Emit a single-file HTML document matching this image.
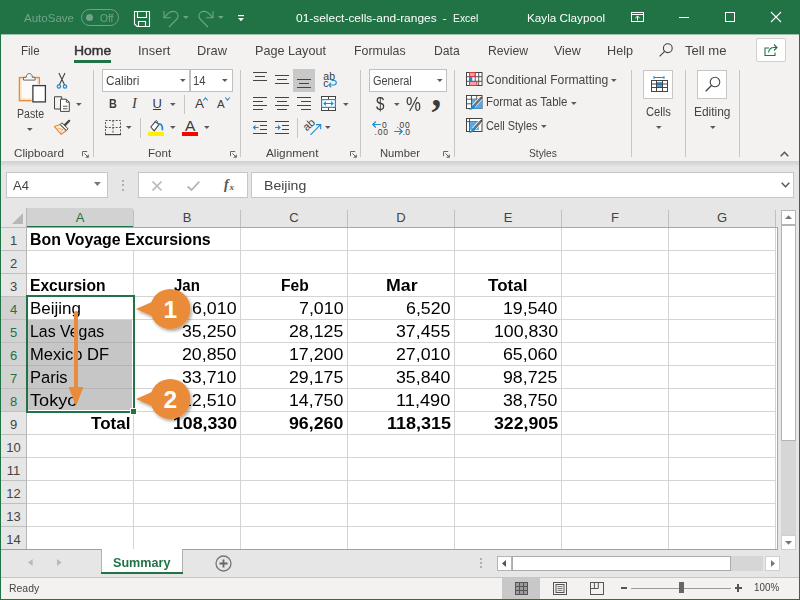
<!DOCTYPE html>
<html>
<head>
<meta charset="utf-8">
<title>01-select-cells-and-ranges - Excel</title>
<style>
html,body{margin:0;padding:0;}
body{width:800px;height:600px;overflow:hidden;background:#f3f2f1;font-family:"Liberation Sans",sans-serif;font-size:12px;color:#444;position:relative;}
#win{position:absolute;left:0;top:0;width:800px;height:600px;overflow:hidden;}
#win div,#win span,#win svg{position:absolute;}
#win svg{overflow:visible;}
.t{white-space:nowrap;line-height:1;color:#444;}

</style>
</head>
<body>
<div id="win">

<!-- TITLE BAR -->
<div style="left:0px;top:0px;width:800px;height:34px;background:#217346;"></div>
<div style="left:0px;top:34px;width:800px;height:1px;background:#9fbfad;"></div>
<span class="t" style="top:13.00px;font-size:11.8px;left:24.00px;transform:scaleX(0.9775);transform-origin:0 0;color:#6fa588;">AutoSave</span>
<div style="left:81px;top:9px;width:38px;height:17px;border:1px solid #6fa588;border-radius:9px;box-sizing:border-box;"></div>
<div style="left:86px;top:14px;width:7px;height:7px;border-radius:4px;background:#6fa588;"></div>
<span class="t" style="top:13.00px;font-size:11px;left:100.00px;transform:scaleX(0.9298);transform-origin:0 0;color:#6fa588;">Off</span>
<svg style="left:134px;top:11px;" width="16" height="16" viewBox="0 0 16 16"><path d="M0.5 0.5 H15.5 V15.5 H3 L0.5 13 Z" fill="none" stroke="#fff" stroke-width="1.1"/><path d="M3.5 0.5 V6.5 H12.5 V0.5" fill="none" stroke="#fff" stroke-width="1.1"/><path d="M4.5 15.5 V10.5 H11.5 V15.5" fill="none" stroke="#fff" stroke-width="1.1"/></svg>
<svg style="left:163px;top:11px;" width="16" height="16" viewBox="0 0 16 16"><path d="M1 0 V6.8 H7.8" fill="none" stroke="#6fa588" stroke-width="1.1"/><path d="M1.3 6.5 L5 2.6 C7.5 0 12 -0.5 14 2 C16 4.5 15 7 13 9 L6 16" fill="none" stroke="#6fa588" stroke-width="1.1"/></svg>
<svg style="left:182.7px;top:15.7px;" width="5.6" height="3.0" viewBox="0 0 5.6 3.0"><path d="M0 0 H5.6 L2.8 3.0 Z" fill="#6fa588"/></svg>
<svg style="left:198px;top:11px;" width="16" height="16" viewBox="0 0 16 16"><g transform="translate(16,0) scale(-1,1)"><path d="M1 0 V6.8 H7.8" fill="none" stroke="#6fa588" stroke-width="1.1"/><path d="M1.3 6.5 L5 2.6 C7.5 0 12 -0.5 14 2 C16 4.5 15 7 13 9 L6 16" fill="none" stroke="#6fa588" stroke-width="1.1"/></g></svg>
<svg style="left:217.7px;top:15.7px;" width="5.6" height="3.0" viewBox="0 0 5.6 3.0"><path d="M0 0 H5.6 L2.8 3.0 Z" fill="#6fa588"/></svg>
<svg style="left:237.5px;top:14.5px;" width="7" height="7" viewBox="0 0 7 7"><path d="M0 0.6 H6" stroke="#fff" stroke-width="1.2"/><path d="M0 3 H6 L3 6.3 Z" fill="#fff"/></svg>
<span class="t" style="top:13.00px;font-size:11.8px;left:295.50px;transform:scaleX(1.0118);transform-origin:0 0;color:#fff;">01-select-cells-and-ranges</span>
<span class="t" style="top:13.00px;font-size:11.8px;left:442.60px;color:#fff;">-</span>
<span class="t" style="top:13.00px;font-size:11.8px;left:453.30px;transform:scaleX(0.8769);transform-origin:0 0;color:#fff;">Excel</span>
<span class="t" style="top:13.00px;font-size:11.8px;left:527.40px;transform:scaleX(0.9910);transform-origin:0 0;color:#fff;">Kayla Claypool</span>
<svg style="left:631px;top:12px;" width="13" height="10" viewBox="0 0 13 10"><rect x="0.5" y="0.5" width="12" height="9" fill="none" stroke="#fff" stroke-width="1"/><path d="M0.5 2.5 H12.5" stroke="#fff" stroke-width="1"/><path d="M6.5 8.5 V4.2 M4.3 6.2 L6.5 4 L8.7 6.2" fill="none" stroke="#fff" stroke-width="1"/></svg>
<div style="left:679px;top:17px;width:10px;height:1px;background:#fff;"></div>
<div style="left:725px;top:12px;width:10px;height:10px;border:1px solid #fff;box-sizing:border-box;"></div>
<svg style="left:771px;top:12px;" width="10" height="10" viewBox="0 0 10 10"><path d="M0 0 L10 10 M10 0 L0 10" stroke="#fff" stroke-width="1.1"/></svg>

<!-- TABS -->
<span class="t" style="top:44.00px;font-size:13.6px;left:20.70px;transform:scaleX(0.8495);transform-origin:0 0;">File</span>
<span class="t" style="top:44.00px;font-size:13.6px;left:74.00px;transform:scaleX(1.0272);transform-origin:0 0;color:#333;-webkit-text-stroke:0.45px #333;">Home</span>
<div style="left:74px;top:60px;width:37px;height:3px;background:#217346;"></div>
<span class="t" style="top:44.00px;font-size:13.6px;left:137.70px;transform:scaleX(0.9500);transform-origin:0 0;">Insert</span>
<span class="t" style="top:44.00px;font-size:13.6px;left:196.70px;transform:scaleX(0.9447);transform-origin:0 0;">Draw</span>
<span class="t" style="top:44.00px;font-size:13.6px;left:255.00px;transform:scaleX(0.9298);transform-origin:0 0;">Page Layout</span>
<span class="t" style="top:44.00px;font-size:13.6px;left:354.30px;transform:scaleX(0.9116);transform-origin:0 0;">Formulas</span>
<span class="t" style="top:44.00px;font-size:13.6px;left:434.30px;transform:scaleX(0.8935);transform-origin:0 0;">Data</span>
<span class="t" style="top:44.00px;font-size:13.6px;left:488.00px;transform:scaleX(0.8967);transform-origin:0 0;">Review</span>
<span class="t" style="top:44.00px;font-size:13.6px;left:554.00px;transform:scaleX(0.9166);transform-origin:0 0;">View</span>
<span class="t" style="top:44.00px;font-size:13.6px;left:607.20px;transform:scaleX(0.9303);transform-origin:0 0;">Help</span>
<svg style="left:659px;top:43px;" width="14" height="14" viewBox="0 0 14 14"><circle cx="8.8" cy="5.2" r="4.4" fill="none" stroke="#444" stroke-width="1.1"/><path d="M5.6 8.4 L0.6 13.4" stroke="#444" stroke-width="1.2"/></svg>
<span class="t" style="top:44.00px;font-size:13.6px;left:685.20px;transform:scaleX(0.9649);transform-origin:0 0;">Tell me</span>
<div style="left:756px;top:38px;width:30px;height:24px;background:#fff;border:1px solid #d0d0d0;border-radius:2px;box-sizing:border-box;"></div>
<svg style="left:764px;top:43px;" width="14" height="13" viewBox="0 0 14 13"><path d="M5 5 H1 V12.5 H11 V9.5" fill="none" stroke="#217346" stroke-width="1.1"/><path d="M4.5 9.5 C5 6.5 7 4.5 10 4.5 H12.5 M10 1.5 L13 4.5 L10 7.5" fill="none" stroke="#217346" stroke-width="1.1"/></svg>

<!-- RIBBON -->
<svg style="left:18px;top:72px;" width="30" height="32" viewBox="0 0 30 32"><rect x="1.5" y="5.6" width="19.8" height="23" fill="#fbfaf8" stroke="#e9893a" stroke-width="1.5"/><rect x="2.9" y="7" width="17" height="20.2" fill="none" stroke="#fbdcae" stroke-width="1.3"/><path d="M5.5 8.1 V5.3 H8.2 C8.2 0.3 14.4 0.3 14.4 5.3 H17.1 V8.1 Z" fill="#f7f7f7" stroke="#6a6a6a" stroke-width="1"/><rect x="13.6" y="12.3" width="15" height="19" fill="#f3f2f1"/><rect x="14.9" y="13.6" width="12.5" height="16.3" fill="#fff" stroke="#3b3b3b" stroke-width="1.3"/></svg>
<span class="t" style="top:108.00px;font-size:12.3px;left:16.90px;transform:scaleX(0.8623);transform-origin:0 0;">Paste</span>
<svg style="left:26.8px;top:127.6px;" width="5.6" height="3.0" viewBox="0 0 5.6 3.0"><path d="M0 0 H5.6 L2.8 3.0 Z" fill="#5a5a5a"/></svg>
<svg style="left:57px;top:72.5px;" width="10" height="16" viewBox="0 0 10 16"><path d="M1.9 0 L7.6 11.9 M8 0 L2.3 11.9" stroke="#444" stroke-width="1.1" fill="none"/><circle cx="1.9" cy="13.5" r="1.7" fill="none" stroke="#1e8bcd" stroke-width="1.2"/><circle cx="8" cy="13.5" r="1.7" fill="none" stroke="#1e8bcd" stroke-width="1.2"/></svg>
<svg style="left:54px;top:96px;" width="17" height="17" viewBox="0 0 17 17"><path d="M7.7 3 V0.75 H0.5 V13 H6" fill="none" stroke="#444" stroke-width="1"/><path d="M6.5 3.2 H12.3 L15.3 6.2 V15.4 H6.5 Z" fill="#fff" stroke="#444" stroke-width="1"/><path d="M12.3 3.2 V6.2 H15.3" fill="none" stroke="#444" stroke-width="0.9"/><path d="M9 10.25 H13.5 M9 12.75 H13.5" stroke="#444" stroke-width="0.9"/></svg>
<svg style="left:75.8px;top:102.6px;" width="5.6" height="3.0" viewBox="0 0 5.6 3.0"><path d="M0 0 H5.6 L2.8 3.0 Z" fill="#5a5a5a"/></svg>
<svg style="left:54px;top:120px;" width="17" height="15" viewBox="0 0 17 15"><path d="M15.2 0.8 L10.6 5.4" stroke="#444" stroke-width="2.2" fill="none" stroke-linecap="round"/><path d="M6.2 4.5 L0.5 6.6 L7.2 14.3 L12.3 10.5 Z" fill="#fdf3e4" stroke="#e8822d" stroke-width="1.1" stroke-linejoin="round"/><path d="M3.6 8 L8.5 9.5 M6 12.5 L10 8" stroke="#e8822d" stroke-width="0.7" fill="none"/><path d="M7.9 2.75 L14 8.75 L12.3 10.5 L6.2 4.5 Z" fill="#f3f2f1" stroke="#444" stroke-width="1" stroke-linejoin="round"/></svg>
<span class="t" style="top:148.00px;font-size:11.2px;left:13.75px;transform:scaleX(1.0431);transform-origin:0 0;">Clipboard</span>
<svg style="left:82px;top:150.5px;" width="7" height="7" viewBox="0 0 7 7"><path d="M0.5 5.2 V0.5 H5.2" fill="none" stroke="#666" stroke-width="1"/><path d="M2.4 2.4 L5.6 5.6" stroke="#666" stroke-width="1"/><path d="M6.8 3.2 V6.8 H3.2 Z" fill="#666"/></svg>
<div style="left:93px;top:69.5px;width:1px;height:87.5px;background:#c8c6c4;"></div>
<div style="left:102px;top:69px;width:88px;height:23px;background:#fff;border:1px solid #c0c0c0;box-sizing:border-box;"></div>
<span class="t" style="top:75.00px;font-size:12.5px;left:105.50px;transform:scaleX(0.9397);transform-origin:0 0;">Calibri</span>
<svg style="left:179.7px;top:79.1px;" width="5.6" height="3.0" viewBox="0 0 5.6 3.0"><path d="M0 0 H5.6 L2.8 3.0 Z" fill="#5a5a5a"/></svg>
<div style="left:190px;top:69px;width:43px;height:23px;background:#fff;border:1px solid #c0c0c0;box-sizing:border-box;"></div>
<span class="t" style="top:75.00px;font-size:12.5px;left:193.00px;transform:scaleX(0.9009);transform-origin:0 0;">14</span>
<svg style="left:222.2px;top:79.1px;" width="5.6" height="3.0" viewBox="0 0 5.6 3.0"><path d="M0 0 H5.6 L2.8 3.0 Z" fill="#5a5a5a"/></svg>
<span class="t" style="top:97.00px;font-size:13px;left:109.30px;font-weight:bold;color:#3b3b3b;transform:scaleX(0.84);transform-origin:0 0;">B</span>
<span class="t" style="top:95.53px;font-size:14.5px;left:132.00px;font-style:italic;color:#3b3b3b;font-family:'Liberation Serif',serif;">I</span>
<span class="t" style="top:97.00px;font-size:13px;left:152.50px;color:#3b3b3b;">U</span>
<div style="left:152.5px;top:109.3px;width:8.5px;height:1px;background:#3b3b3b;"></div>
<svg style="left:170.2px;top:102.6px;" width="5.6" height="3.0" viewBox="0 0 5.6 3.0"><path d="M0 0 H5.6 L2.8 3.0 Z" fill="#5a5a5a"/></svg>
<div style="left:184px;top:95px;width:1px;height:19px;background:#c8c6c4;"></div>
<span class="t" style="top:97.00px;font-size:13.5px;left:195.00px;color:#3b3b3b;">A</span>
<svg style="left:203.3px;top:96.8px;" width="5" height="4" viewBox="0 0 5 4"><path d="M0.3 3.5 L2.5 0.8 L4.7 3.5" fill="none" stroke="#1e8bcd" stroke-width="1.1"/></svg>
<span class="t" style="top:99.00px;font-size:11.5px;left:217.00px;color:#3b3b3b;">A</span>
<svg style="left:225px;top:96.8px;" width="5" height="4" viewBox="0 0 5 4"><path d="M0.3 0.5 L2.5 3.2 L4.7 0.5" fill="none" stroke="#1e8bcd" stroke-width="1.1"/></svg>
<svg style="left:105px;top:120px;" width="16" height="15" viewBox="0 0 16 15"><rect x="0.5" y="0.5" width="15" height="14" fill="none" stroke="#555" stroke-width="1" stroke-dasharray="2 1.4"/><path d="M8 0.5 V14.5 M0.5 7.5 H15.5" stroke="#555" stroke-width="1" stroke-dasharray="2 1.4"/><path d="M0 14.6 H16" stroke="#444" stroke-width="1.2"/></svg>
<svg style="left:126.2px;top:126.1px;" width="5.6" height="3.0" viewBox="0 0 5.6 3.0"><path d="M0 0 H5.6 L2.8 3.0 Z" fill="#5a5a5a"/></svg>
<div style="left:140px;top:118px;width:1px;height:19.5px;background:#c8c6c4;"></div>
<svg style="left:150px;top:119.5px;" width="15" height="12" viewBox="0 0 15 12"><path d="M0.8 7 L5.3 1.6 L8.9 4.6 L4.2 10.8 Z" fill="#fff" stroke="#444" stroke-width="1.1" stroke-linejoin="round"/><path d="M5.3 1.6 C5.6 0.2 7.3 0.2 7.4 1.8 L7.2 3.2" fill="none" stroke="#444" stroke-width="0.9"/><path d="M8.6 3.9 C11 3.3 12.6 5.5 12.4 9.6" fill="none" stroke="#1e8bcd" stroke-width="1.7" stroke-linecap="round"/></svg>
<div style="left:148px;top:132px;width:16px;height:4px;background:#ffef00;"></div>
<svg style="left:169.7px;top:126.1px;" width="5.6" height="3.0" viewBox="0 0 5.6 3.0"><path d="M0 0 H5.6 L2.8 3.0 Z" fill="#5a5a5a"/></svg>
<span class="t" style="top:118.00px;font-size:15.5px;left:185.00px;color:#3b3b3b;">A</span>
<div style="left:182px;top:132px;width:16px;height:4px;background:#f00;"></div>
<svg style="left:203.9px;top:126.1px;" width="5.6" height="3.0" viewBox="0 0 5.6 3.0"><path d="M0 0 H5.6 L2.8 3.0 Z" fill="#5a5a5a"/></svg>
<span class="t" style="top:148.00px;font-size:11.2px;left:147.50px;transform:scaleX(1.0357);transform-origin:0 0;">Font</span>
<svg style="left:229.5px;top:150.5px;" width="7" height="7" viewBox="0 0 7 7"><path d="M0.5 5.2 V0.5 H5.2" fill="none" stroke="#666" stroke-width="1"/><path d="M2.4 2.4 L5.6 5.6" stroke="#666" stroke-width="1"/><path d="M6.8 3.2 V6.8 H3.2 Z" fill="#666"/></svg>
<div style="left:240px;top:69.5px;width:1px;height:87.5px;background:#c8c6c4;"></div>
<svg style="left:253px;top:72px;" width="14" height="12" viewBox="0 0 14 12"><path d="M0.0 0.5 H14.0" stroke="#444" stroke-width="1"/><path d="M2.0 4.5 H12.0" stroke="#444" stroke-width="1"/><path d="M0.0 8.5 H14.0" stroke="#444" stroke-width="1"/></svg>
<svg style="left:275px;top:75px;" width="14" height="12" viewBox="0 0 14 12"><path d="M0.0 0.5 H14.0" stroke="#444" stroke-width="1"/><path d="M2.0 4.5 H12.0" stroke="#444" stroke-width="1"/><path d="M0.0 8.5 H14.0" stroke="#444" stroke-width="1"/></svg>
<div style="left:293px;top:69px;width:22px;height:23px;background:#c8c8c8;"></div>
<svg style="left:297px;top:79px;" width="14" height="12" viewBox="0 0 14 12"><path d="M0.0 0.5 H14.0" stroke="#444" stroke-width="1"/><path d="M2.0 4.5 H12.0" stroke="#444" stroke-width="1"/><path d="M0.0 8.5 H14.0" stroke="#444" stroke-width="1"/></svg>
<span class="t" style="top:71.00px;font-size:10.5px;left:323.30px;color:#3b3b3b;">ab</span>
<span class="t" style="top:78.00px;font-size:10.5px;left:323.30px;color:#3b3b3b;">c</span>
<svg style="left:328px;top:80.3px;" width="9" height="7.5" viewBox="0 0 9 7.5"><path d="M3.5 0.5 H6 C9 0.5 9 5 6 5 H1 M3.2 2.6 L0.8 5 L3.2 7.4" fill="none" stroke="#1e8bcd" stroke-width="1.1"/></svg>
<svg style="left:253px;top:96.5px;" width="14" height="16" viewBox="0 0 14 16"><path d="M0 0.5 H14" stroke="#444" stroke-width="1"/><path d="M0 4.5 H10" stroke="#444" stroke-width="1"/><path d="M0 8.5 H14" stroke="#444" stroke-width="1"/><path d="M0 12.5 H10" stroke="#444" stroke-width="1"/></svg>
<svg style="left:275px;top:96.5px;" width="14" height="16" viewBox="0 0 14 16"><path d="M0.0 0.5 H14.0" stroke="#444" stroke-width="1"/><path d="M2.0 4.5 H12.0" stroke="#444" stroke-width="1"/><path d="M0.0 8.5 H14.0" stroke="#444" stroke-width="1"/><path d="M2.0 12.5 H12.0" stroke="#444" stroke-width="1"/></svg>
<svg style="left:296.5px;top:96.5px;" width="14" height="16" viewBox="0 0 14 16"><path d="M0 0.5 H14" stroke="#444" stroke-width="1"/><path d="M4 4.5 H14" stroke="#444" stroke-width="1"/><path d="M0 8.5 H14" stroke="#444" stroke-width="1"/><path d="M4 12.5 H14" stroke="#444" stroke-width="1"/></svg>
<svg style="left:321px;top:96px;" width="15" height="15" viewBox="0 0 15 15"><rect x="0.5" y="0.5" width="14" height="14" fill="#fff" stroke="#444" stroke-width="1"/><path d="M7.5 0.5 V3.5 M7.5 11.5 V14.5" stroke="#444" stroke-width="1"/><rect x="0.6" y="3.6" width="13.8" height="7.8" fill="#fff" stroke="#1e8bcd" stroke-width="1.2"/><path d="M3 7.5 H12 M5 5.6 L3 7.5 L5 9.4 M10 5.6 L12 7.5 L10 9.4" fill="none" stroke="#1e8bcd" stroke-width="1.1"/></svg>
<svg style="left:342.7px;top:102.6px;" width="5.6" height="3.0" viewBox="0 0 5.6 3.0"><path d="M0 0 H5.6 L2.8 3.0 Z" fill="#5a5a5a"/></svg>
<svg style="left:253px;top:120.5px;" width="14" height="14" viewBox="0 0 14 14"><path d="M0 0.5 H14 M7 4.5 H14 M7 8.5 H14 M0 12.5 H14" stroke="#444" stroke-width="1"/><path d="M0.5 6.5 H5.5 M2.5 4.5 L0.5 6.5 L2.5 8.5" fill="none" stroke="#1e8bcd" stroke-width="1.1"/></svg>
<svg style="left:275px;top:120.5px;" width="14" height="14" viewBox="0 0 14 14"><path d="M0 0.5 H14 M7 4.5 H14 M7 8.5 H14 M0 12.5 H14" stroke="#444" stroke-width="1"/><path d="M0 6.5 H5 M3 4.5 L5 6.5 L3 8.5" fill="none" stroke="#1e8bcd" stroke-width="1.1"/></svg>
<div style="left:297px;top:118px;width:1px;height:20px;background:#c8c6c4;"></div>
<span class="t" style="left:308px;top:121.5px;font-size:11px;color:#3b3b3b;transform:rotate(-42deg);transform-origin:0 100%;">ab</span>
<svg style="left:310px;top:123.5px;" width="11" height="11" viewBox="0 0 11 11"><path d="M0.5 10.8 L10.6 0.7 M6 0.6 H10.7 V5.3" fill="none" stroke="#1e8bcd" stroke-width="1.1"/></svg>
<svg style="left:324.7px;top:126.1px;" width="5.6" height="3.0" viewBox="0 0 5.6 3.0"><path d="M0 0 H5.6 L2.8 3.0 Z" fill="#5a5a5a"/></svg>
<span class="t" style="top:148.00px;font-size:11.2px;left:266.25px;transform:scaleX(1.0546);transform-origin:0 0;">Alignment</span>
<svg style="left:349.5px;top:150.5px;" width="7" height="7" viewBox="0 0 7 7"><path d="M0.5 5.2 V0.5 H5.2" fill="none" stroke="#666" stroke-width="1"/><path d="M2.4 2.4 L5.6 5.6" stroke="#666" stroke-width="1"/><path d="M6.8 3.2 V6.8 H3.2 Z" fill="#666"/></svg>
<div style="left:360px;top:69.5px;width:1px;height:87.5px;background:#c8c6c4;"></div>
<div style="left:369px;top:69px;width:78px;height:23px;background:#fff;border:1px solid #c0c0c0;box-sizing:border-box;"></div>
<span class="t" style="top:75.00px;font-size:12.5px;left:372.50px;transform:scaleX(0.8719);transform-origin:0 0;">General</span>
<svg style="left:436.5px;top:79.1px;" width="5.6" height="3.0" viewBox="0 0 5.6 3.0"><path d="M0 0 H5.6 L2.8 3.0 Z" fill="#5a5a5a"/></svg>
<span class="t" style="top:94.00px;font-size:19px;left:375.60px;color:#3b3b3b;transform:scaleX(0.8);transform-origin:0 0;">$</span>
<svg style="left:393.5px;top:102.6px;" width="5.6" height="3.0" viewBox="0 0 5.6 3.0"><path d="M0 0 H5.6 L2.8 3.0 Z" fill="#5a5a5a"/></svg>
<span class="t" style="top:94.00px;font-size:20px;left:405.80px;color:#3b3b3b;transform:scaleX(0.84);transform-origin:0 0;">%</span>
<span class="t" style="top:73.29px;font-size:39px;left:431.60px;font-weight:bold;color:#3b3b3b;font-family:'Liberation Serif',serif;">,</span>
<svg style="left:371.8px;top:121px;" width="9" height="7" viewBox="0 0 9 7"><path d="M8.8 3.5 H0.9 M3.8 0.5 L0.8 3.5 L3.8 6.5" fill="none" stroke="#1e8bcd" stroke-width="1.2"/></svg>
<span class="t" style="top:121.00px;font-size:8.5px;left:382.00px;color:#3b3b3b;">0</span>
<span class="t" style="top:128.00px;font-size:8.5px;left:374.50px;letter-spacing:0.89px;color:#3b3b3b;">.00</span>
<span class="t" style="top:121.00px;font-size:8.5px;left:396.50px;letter-spacing:0.73px;color:#3b3b3b;">.00</span>
<svg style="left:393.8px;top:128.4px;" width="9" height="7" viewBox="0 0 9 7"><path d="M0.2 3.5 H8.1 M5.2 0.5 L8.2 3.5 L5.2 6.5" fill="none" stroke="#1e8bcd" stroke-width="1.2"/></svg>
<span class="t" style="top:128.00px;font-size:8.5px;left:402.80px;color:#3b3b3b;">.0</span>
<span class="t" style="top:148.00px;font-size:11.2px;left:379.50px;transform:scaleX(1.0046);transform-origin:0 0;">Number</span>
<svg style="left:443px;top:150.5px;" width="7" height="7" viewBox="0 0 7 7"><path d="M0.5 5.2 V0.5 H5.2" fill="none" stroke="#666" stroke-width="1"/><path d="M2.4 2.4 L5.6 5.6" stroke="#666" stroke-width="1"/><path d="M6.8 3.2 V6.8 H3.2 Z" fill="#666"/></svg>
<div style="left:454px;top:69.5px;width:1px;height:87.5px;background:#c8c6c4;"></div>
<svg style="left:466px;top:72px;" width="17" height="14" viewBox="0 0 17 14"><rect x="0.5" y="0.5" width="15.5" height="13" fill="#fff" stroke="#444" stroke-width="1"/><path d="M3.5 0.5 V13.5 M12.7 0.5 V13.5 M0.5 4.7 H16 M0.5 9.3 H16 M9.2 0.5 V13.5" stroke="#444" stroke-width="0.9"/><rect x="3.5" y="0.6" width="5.6" height="3.8" fill="#f9a3ad" stroke="#e0343c" stroke-width="1"/><rect x="3.5" y="9.6" width="7.4" height="3.8" fill="#f9a3ad" stroke="#e0343c" stroke-width="1"/><rect x="3.1" y="5.1" width="3.2" height="3.9" fill="#1e8bcd"/><path d="M3.5 0.5 V13.5" stroke="#e0343c" stroke-width="1"/></svg>
<span class="t" style="top:74.00px;font-size:12.2px;left:485.80px;transform:scaleX(0.9973);transform-origin:0 0;">Conditional Formatting</span>
<svg style="left:611.2px;top:79.1px;" width="5.6" height="3.0" viewBox="0 0 5.6 3.0"><path d="M0 0 H5.6 L2.8 3.0 Z" fill="#5a5a5a"/></svg>
<svg style="left:466px;top:95px;" width="17" height="15" viewBox="0 0 17 15"><rect x="0.5" y="0.5" width="15.5" height="13" fill="#fff" stroke="#444" stroke-width="1"/><path d="M5.5 0.5 V13.5 M10.7 0.5 V13.5 M0.5 4.2 H16 M0.5 8.8 H16" stroke="#444" stroke-width="0.9"/><rect x="5.9" y="4.6" width="10.3" height="9.1" fill="#5aa7e6"/><path d="M15 3.2 L7.5 11.2" stroke="#f3f2f1" stroke-width="4"/><path d="M15.2 3 L8 10.7" stroke="#444" stroke-width="2.2" stroke-linecap="round"/><path d="M14.8 3.4 L8.6 10" stroke="#bdbdbd" stroke-width="0.7"/><path d="M8.6 9.2 L10 10.8 C8 14 5.5 14.8 3 14.6 C5 13.5 5.5 11 8.6 9.2 Z" fill="#1e8bcd"/></svg>
<span class="t" style="top:96.00px;font-size:12.2px;left:485.80px;transform:scaleX(0.9332);transform-origin:0 0;">Format as Table</span>
<svg style="left:570.7px;top:101.6px;" width="5.6" height="3.0" viewBox="0 0 5.6 3.0"><path d="M0 0 H5.6 L2.8 3.0 Z" fill="#5a5a5a"/></svg>
<svg style="left:466px;top:118px;" width="17" height="15" viewBox="0 0 17 15"><rect x="0.5" y="0.5" width="15.5" height="13" fill="#fff" stroke="#444" stroke-width="1"/><path d="M3.5 0.5 V13.5 M0.5 3.7 H16" stroke="#444" stroke-width="0.9"/><rect x="3.9" y="4.1" width="9" height="7.8" fill="#5aa7e6"/><path d="M15 3.2 L7.5 11.2" stroke="#f3f2f1" stroke-width="4"/><path d="M15.2 3 L8 10.7" stroke="#444" stroke-width="2.2" stroke-linecap="round"/><path d="M14.8 3.4 L8.6 10" stroke="#bdbdbd" stroke-width="0.7"/><path d="M8.6 9.2 L10 10.8 C8 14 5.5 14.8 3 14.6 C5 13.5 5.5 11 8.6 9.2 Z" fill="#1e8bcd"/></svg>
<span class="t" style="top:120.00px;font-size:12.2px;left:485.80px;transform:scaleX(0.8934);transform-origin:0 0;">Cell Styles</span>
<svg style="left:540.7px;top:124.6px;" width="5.6" height="3.0" viewBox="0 0 5.6 3.0"><path d="M0 0 H5.6 L2.8 3.0 Z" fill="#5a5a5a"/></svg>
<span class="t" style="top:148.00px;font-size:11.2px;left:528.50px;transform:scaleX(0.9174);transform-origin:0 0;">Styles</span>
<div style="left:631px;top:69.5px;width:1px;height:87.5px;background:#c8c6c4;"></div>
<div style="left:643px;top:69.5px;width:30px;height:29.5px;background:#fff;border:1px solid #c6c6c6;box-sizing:border-box;"></div>
<svg style="left:651px;top:76px;" width="17" height="16" viewBox="0 0 17 16"><path d="M3 1.5 H13 M3 0 V3 M13 0 V3" stroke="#1e8bcd" stroke-width="1"/><rect x="0.5" y="4.5" width="16" height="11" fill="#fff" stroke="#444" stroke-width="1"/><rect x="5.5" y="6" width="6" height="5" fill="#1e8bcd" opacity="0.8"/><path d="M5.5 4.5 V15.5 M11.5 4.5 V15.5 M0.5 8 H16.5 M0.5 11.5 H16.5" stroke="#444" stroke-width="1"/></svg>
<span class="t" style="top:106.00px;font-size:12.5px;left:646.25px;transform:scaleX(0.8989);transform-origin:0 0;">Cells</span>
<svg style="left:655.8px;top:126.0px;" width="5.6" height="3.0" viewBox="0 0 5.6 3.0"><path d="M0 0 H5.6 L2.8 3.0 Z" fill="#5a5a5a"/></svg>
<div style="left:685px;top:69.5px;width:1px;height:87.5px;background:#c8c6c4;"></div>
<div style="left:697px;top:69.5px;width:30px;height:29.5px;background:#fff;border:1px solid #c6c6c6;box-sizing:border-box;"></div>
<svg style="left:705px;top:76px;" width="16" height="16" viewBox="0 0 16 16"><circle cx="10" cy="6" r="4.8" fill="none" stroke="#444" stroke-width="1.1"/><path d="M6.5 9.5 L0.7 15.3" stroke="#444" stroke-width="1.3"/></svg>
<span class="t" style="top:106.00px;font-size:12.5px;left:694.25px;transform:scaleX(0.9542);transform-origin:0 0;">Editing</span>
<svg style="left:709.6px;top:126.0px;" width="5.6" height="3.0" viewBox="0 0 5.6 3.0"><path d="M0 0 H5.6 L2.8 3.0 Z" fill="#5a5a5a"/></svg>
<div style="left:739px;top:69.5px;width:1px;height:87.5px;background:#c8c6c4;"></div>
<svg style="left:780px;top:150.5px;" width="9" height="6" viewBox="0 0 9 6"><path d="M0.7 5.3 L4.5 1.2 L8.3 5.3" fill="none" stroke="#555" stroke-width="1.4"/></svg>
<div style="left:0;top:161px;width:800px;height:6px;background:linear-gradient(#d0d0d0,#e6e6e6);"></div>

<!-- FORMULA BAR -->
<div style="left:0px;top:166px;width:800px;height:42px;background:#e6e6e6;"></div>
<div style="left:6px;top:172px;width:102px;height:26px;background:#fff;border:1px solid #c6c6c6;box-sizing:border-box;"></div>
<span class="t" style="top:179.00px;font-size:13px;left:13.00px;transform:scaleX(1.0047);transform-origin:0 0;">A4</span>
<svg style="left:94.2px;top:181.8px;" width="6.8" height="4" viewBox="0 0 6.8 4"><path d="M0 0 H6.8 L3.4 4 Z" fill="#777"/></svg>
<div style="left:121.8px;top:180px;width:2px;height:2px;background:#b0b0b0;"></div>
<div style="left:121.8px;top:184.4px;width:2px;height:2px;background:#b0b0b0;"></div>
<div style="left:121.8px;top:188.8px;width:2px;height:2px;background:#b0b0b0;"></div>
<div style="left:138px;top:172px;width:110px;height:26px;background:#fff;border:1px solid #c6c6c6;box-sizing:border-box;"></div>
<svg style="left:152px;top:180.5px;" width="10" height="10" viewBox="0 0 10 10"><path d="M0.5 0.5 L9.5 9.5 M9.5 0.5 L0.5 9.5" stroke="#b6b6b6" stroke-width="1.6"/></svg>
<svg style="left:187px;top:180.5px;" width="13" height="10" viewBox="0 0 13 10"><path d="M0.7 5.5 L4.5 9 L12.3 0.7" fill="none" stroke="#b6b6b6" stroke-width="1.8"/></svg>
<span class="t" style="top:178.15px;font-size:14px;left:224.00px;font-weight:bold;font-style:italic;color:#555;font-family:'Liberation Serif',serif;">f</span>
<span class="t" style="top:182.88px;font-size:9px;left:229.50px;font-weight:bold;font-style:italic;color:#555;font-family:'Liberation Serif',serif;">x</span>
<div style="left:251px;top:172px;width:543px;height:26px;background:#fff;border:1px solid #c6c6c6;box-sizing:border-box;"></div>
<span class="t" style="top:179.00px;font-size:13px;left:263.80px;transform:scaleX(1.0821);transform-origin:0 0;">Beijing</span>
<svg style="left:780.5px;top:181.5px;" width="9" height="6" viewBox="0 0 9 6"><path d="M0.7 0.7 L4.5 4.8 L8.3 0.7" fill="none" stroke="#555" stroke-width="1.4"/></svg>

<!-- GRID -->
<div style="left:0px;top:208px;width:778px;height:342px;background:#fff;"></div>
<div style="left:0px;top:208px;width:778px;height:20px;background:#e6e6e6;"></div>
<div style="left:0px;top:228px;width:26px;height:322px;background:#e6e6e6;"></div>
<div style="left:27px;top:208px;width:106px;height:18px;background:#d2d2d2;"></div>
<div style="left:26px;top:225.7px;width:108px;height:2.6px;background:#217346;"></div>
<div style="left:0px;top:297px;width:26px;height:115px;background:#d2d2d2;"></div>
<svg style="left:12px;top:212.5px;" width="11" height="11" viewBox="0 0 11 11"><path d="M11 0 V11 H0 Z" fill="#b7b7b7"/></svg>
<div style="left:133px;top:210px;width:1px;height:17px;background:#c0c0c0;"></div>
<div style="left:240px;top:210px;width:1px;height:17px;background:#c0c0c0;"></div>
<div style="left:347px;top:210px;width:1px;height:17px;background:#c0c0c0;"></div>
<div style="left:454px;top:210px;width:1px;height:17px;background:#c0c0c0;"></div>
<div style="left:561px;top:210px;width:1px;height:17px;background:#c0c0c0;"></div>
<div style="left:668px;top:210px;width:1px;height:17px;background:#c0c0c0;"></div>
<div style="left:775px;top:210px;width:1px;height:17px;background:#c0c0c0;"></div>
<div style="left:27px;top:227px;width:751px;height:1px;background:#a8a8a8;"></div>
<span class="t" style="top:211.00px;font-size:13px;left:75.66px;color:#217346;">A</span>
<span class="t" style="top:211.00px;font-size:13px;left:182.66px;color:#444;">B</span>
<span class="t" style="top:211.00px;font-size:13px;left:289.31px;color:#444;">C</span>
<span class="t" style="top:211.00px;font-size:13px;left:396.31px;color:#444;">D</span>
<span class="t" style="top:211.00px;font-size:13px;left:503.66px;color:#444;">E</span>
<span class="t" style="top:211.00px;font-size:13px;left:611.03px;color:#444;">F</span>
<span class="t" style="top:211.00px;font-size:13px;left:716.94px;color:#444;">G</span>
<div style="left:133px;top:228px;width:1px;height:322px;background:#d4d4d4;"></div>
<div style="left:240px;top:228px;width:1px;height:322px;background:#d4d4d4;"></div>
<div style="left:347px;top:228px;width:1px;height:322px;background:#d4d4d4;"></div>
<div style="left:454px;top:228px;width:1px;height:322px;background:#d4d4d4;"></div>
<div style="left:561px;top:228px;width:1px;height:322px;background:#d4d4d4;"></div>
<div style="left:668px;top:228px;width:1px;height:322px;background:#d4d4d4;"></div>
<div style="left:775px;top:228px;width:1px;height:322px;background:#d4d4d4;"></div>
<div style="left:27px;top:250px;width:749px;height:1px;background:#d4d4d4;"></div>
<div style="left:0px;top:250px;width:26px;height:1px;background:#c0c0c0;"></div>
<div style="left:27px;top:273px;width:749px;height:1px;background:#d4d4d4;"></div>
<div style="left:0px;top:273px;width:26px;height:1px;background:#c0c0c0;"></div>
<div style="left:27px;top:296px;width:749px;height:1px;background:#d4d4d4;"></div>
<div style="left:0px;top:296px;width:26px;height:1px;background:#c0c0c0;"></div>
<div style="left:27px;top:319px;width:749px;height:1px;background:#d4d4d4;"></div>
<div style="left:0px;top:319px;width:26px;height:1px;background:#c0c0c0;"></div>
<div style="left:27px;top:342px;width:749px;height:1px;background:#d4d4d4;"></div>
<div style="left:0px;top:342px;width:26px;height:1px;background:#c0c0c0;"></div>
<div style="left:27px;top:365px;width:749px;height:1px;background:#d4d4d4;"></div>
<div style="left:0px;top:365px;width:26px;height:1px;background:#c0c0c0;"></div>
<div style="left:27px;top:388px;width:749px;height:1px;background:#d4d4d4;"></div>
<div style="left:0px;top:388px;width:26px;height:1px;background:#c0c0c0;"></div>
<div style="left:27px;top:411px;width:749px;height:1px;background:#d4d4d4;"></div>
<div style="left:0px;top:411px;width:26px;height:1px;background:#c0c0c0;"></div>
<div style="left:27px;top:434px;width:749px;height:1px;background:#d4d4d4;"></div>
<div style="left:0px;top:434px;width:26px;height:1px;background:#c0c0c0;"></div>
<div style="left:27px;top:457px;width:749px;height:1px;background:#d4d4d4;"></div>
<div style="left:0px;top:457px;width:26px;height:1px;background:#c0c0c0;"></div>
<div style="left:27px;top:480px;width:749px;height:1px;background:#d4d4d4;"></div>
<div style="left:0px;top:480px;width:26px;height:1px;background:#c0c0c0;"></div>
<div style="left:27px;top:503px;width:749px;height:1px;background:#d4d4d4;"></div>
<div style="left:0px;top:503px;width:26px;height:1px;background:#c0c0c0;"></div>
<div style="left:27px;top:526px;width:749px;height:1px;background:#d4d4d4;"></div>
<div style="left:0px;top:526px;width:26px;height:1px;background:#c0c0c0;"></div>
<div style="left:27px;top:549px;width:749px;height:1px;background:#d4d4d4;"></div>
<div style="left:0px;top:549px;width:26px;height:1px;background:#c0c0c0;"></div>
<div style="left:133px;top:228px;width:1px;height:22px;background:#fff;"></div>
<div style="left:26px;top:208px;width:1px;height:342px;background:#b5b5b5;"></div>
<div style="left:0px;top:227px;width:26px;height:1px;background:#c0c0c0;"></div>
<div style="left:0px;top:549px;width:778px;height:1px;background:#a0a0a0;"></div>
<div style="left:777px;top:227px;width:1px;height:323px;background:#a6a6a6;"></div>
<span class="t" style="top:234.00px;font-size:13px;left:9.88px;color:#444;">1</span>
<span class="t" style="top:257.00px;font-size:13px;left:9.88px;color:#444;">2</span>
<span class="t" style="top:280.00px;font-size:13px;left:9.88px;color:#444;">3</span>
<span class="t" style="top:303.00px;font-size:13px;left:9.88px;color:#217346;">4</span>
<span class="t" style="top:326.00px;font-size:13px;left:9.88px;color:#217346;">5</span>
<span class="t" style="top:349.00px;font-size:13px;left:9.88px;color:#217346;">6</span>
<span class="t" style="top:372.00px;font-size:13px;left:9.88px;color:#217346;">7</span>
<span class="t" style="top:395.00px;font-size:13px;left:9.88px;color:#217346;">8</span>
<span class="t" style="top:418.00px;font-size:13px;left:9.88px;color:#444;">9</span>
<span class="t" style="top:441.00px;font-size:13px;left:6.27px;color:#444;">10</span>
<span class="t" style="top:464.00px;font-size:13px;left:6.75px;color:#444;">11</span>
<span class="t" style="top:487.00px;font-size:13px;left:6.27px;color:#444;">12</span>
<span class="t" style="top:510.00px;font-size:13px;left:6.27px;color:#444;">13</span>
<span class="t" style="top:533.00px;font-size:13px;left:6.27px;color:#444;">14</span>
<div style="left:28px;top:320px;width:104px;height:90px;background:#c6c6c6;"></div>
<div style="left:28px;top:342px;width:104px;height:1px;background:#b4b4b4;"></div>
<div style="left:28px;top:365px;width:104px;height:1px;background:#b4b4b4;"></div>
<div style="left:28px;top:388px;width:104px;height:1px;background:#b4b4b4;"></div>
<span class="t" style="top:231.00px;font-size:17.4px;left:30.10px;transform:scaleX(0.9135);transform-origin:0 0;font-weight:bold;color:#000;">Bon Voyage Excursions</span>
<span class="t" style="top:277.00px;font-size:17.4px;left:30.10px;transform:scaleX(0.8986);transform-origin:0 0;font-weight:bold;color:#000;">Excursion</span>
<span class="t" style="top:277.00px;font-size:17.4px;left:174.30px;transform:scaleX(0.8596);transform-origin:0 0;font-weight:bold;color:#000;">Jan</span>
<span class="t" style="top:277.00px;font-size:17.4px;left:280.80px;transform:scaleX(0.8976);transform-origin:0 0;font-weight:bold;color:#000;">Feb</span>
<span class="t" style="top:277.00px;font-size:17.4px;left:386.20px;transform:scaleX(1.0203);transform-origin:0 0;font-weight:bold;color:#000;">Mar</span>
<span class="t" style="top:277.00px;font-size:17.4px;left:487.80px;transform:scaleX(0.9781);transform-origin:0 0;font-weight:bold;color:#000;">Total</span>
<span class="t" style="top:300.00px;font-size:17.4px;left:30.10px;transform:scaleX(0.9770);transform-origin:0 0;color:#000;">Beijing</span>
<span class="t" style="top:323.00px;font-size:17.4px;left:30.10px;transform:scaleX(0.9131);transform-origin:0 0;color:#000;">Las Vegas</span>
<span class="t" style="top:346.00px;font-size:17.4px;left:30.10px;transform:scaleX(0.9522);transform-origin:0 0;color:#000;">Mexico DF</span>
<span class="t" style="top:369.00px;font-size:17.4px;left:30.10px;transform:scaleX(0.9478);transform-origin:0 0;color:#000;">Paris</span>
<span class="t" style="top:392.00px;font-size:17.4px;left:29.50px;transform:scaleX(1.0437);transform-origin:0 0;color:#000;">Tokyo</span>
<span class="t" style="top:300.00px;font-size:17.4px;left:192.10px;transform:scaleX(1.0232);transform-origin:0 0;color:#000;">6,010</span>
<span class="t" style="top:300.00px;font-size:17.4px;left:299.10px;transform:scaleX(1.0232);transform-origin:0 0;color:#000;">7,010</span>
<span class="t" style="top:300.00px;font-size:17.4px;left:406.10px;transform:scaleX(1.0232);transform-origin:0 0;color:#000;">6,520</span>
<span class="t" style="top:300.00px;font-size:17.4px;left:503.35px;transform:scaleX(1.0208);transform-origin:0 0;color:#000;">19,540</span>
<span class="t" style="top:323.00px;font-size:17.4px;left:182.35px;transform:scaleX(1.0208);transform-origin:0 0;color:#000;">35,250</span>
<span class="t" style="top:323.00px;font-size:17.4px;left:289.35px;transform:scaleX(1.0208);transform-origin:0 0;color:#000;">28,125</span>
<span class="t" style="top:323.00px;font-size:17.4px;left:396.35px;transform:scaleX(1.0208);transform-origin:0 0;color:#000;">37,455</span>
<span class="t" style="top:323.00px;font-size:17.4px;left:493.60px;transform:scaleX(1.0191);transform-origin:0 0;color:#000;">100,830</span>
<span class="t" style="top:346.00px;font-size:17.4px;left:182.35px;transform:scaleX(1.0208);transform-origin:0 0;color:#000;">20,850</span>
<span class="t" style="top:346.00px;font-size:17.4px;left:289.35px;transform:scaleX(1.0208);transform-origin:0 0;color:#000;">17,200</span>
<span class="t" style="top:346.00px;font-size:17.4px;left:396.35px;transform:scaleX(1.0208);transform-origin:0 0;color:#000;">27,010</span>
<span class="t" style="top:346.00px;font-size:17.4px;left:503.35px;transform:scaleX(1.0208);transform-origin:0 0;color:#000;">65,060</span>
<span class="t" style="top:369.00px;font-size:17.4px;left:182.35px;transform:scaleX(1.0208);transform-origin:0 0;color:#000;">33,710</span>
<span class="t" style="top:369.00px;font-size:17.4px;left:289.35px;transform:scaleX(1.0208);transform-origin:0 0;color:#000;">29,175</span>
<span class="t" style="top:369.00px;font-size:17.4px;left:396.35px;transform:scaleX(1.0208);transform-origin:0 0;color:#000;">35,840</span>
<span class="t" style="top:369.00px;font-size:17.4px;left:503.35px;transform:scaleX(1.0208);transform-origin:0 0;color:#000;">98,725</span>
<span class="t" style="top:392.00px;font-size:17.4px;left:182.35px;transform:scaleX(1.0208);transform-origin:0 0;color:#000;">12,510</span>
<span class="t" style="top:392.00px;font-size:17.4px;left:289.35px;transform:scaleX(1.0208);transform-origin:0 0;color:#000;">14,750</span>
<span class="t" style="top:392.00px;font-size:17.4px;left:396.35px;transform:scaleX(1.0464);transform-origin:0 0;color:#000;">11,490</span>
<span class="t" style="top:392.00px;font-size:17.4px;left:503.35px;transform:scaleX(1.0208);transform-origin:0 0;color:#000;">38,750</span>
<span class="t" style="top:415.00px;font-size:17.4px;left:90.80px;transform:scaleX(0.9781);transform-origin:0 0;font-weight:bold;color:#000;">Total</span>
<span class="t" style="top:415.00px;font-size:17.4px;left:172.60px;transform:scaleX(1.0191);transform-origin:0 0;font-weight:bold;color:#000;">108,330</span>
<span class="t" style="top:415.00px;font-size:17.4px;left:289.35px;transform:scaleX(1.0208);transform-origin:0 0;font-weight:bold;color:#000;">96,260</span>
<span class="t" style="top:415.00px;font-size:17.4px;left:386.60px;transform:scaleX(1.0348);transform-origin:0 0;font-weight:bold;color:#000;">118,315</span>
<span class="t" style="top:415.00px;font-size:17.4px;left:493.60px;transform:scaleX(1.0191);transform-origin:0 0;font-weight:bold;color:#000;">322,905</span>
<div style="left:25.5px;top:295px;width:109.5px;height:118px;border:2px solid #217346;box-sizing:border-box;"></div>
<div style="left:130px;top:408px;width:7px;height:7px;background:#fff;"></div>
<div style="left:131px;top:409px;width:5px;height:5px;background:#217346;"></div>
<svg style="left:68px;top:311px;" width="16" height="96" viewBox="0 0 16 96"><path d="M8 2 V78" stroke="#e98b39" stroke-width="3.9" stroke-linecap="round"/><path d="M0.6 76 H15.4 L8 95.3 Z" fill="#e98b39"/></svg>
<svg style="left:134.3px;top:283.8px;" width="62" height="50" viewBox="0 0 62 50"><defs><filter id="sh1" x="-30%" y="-30%" width="160%" height="170%"><feDropShadow dx="1.5" dy="2" stdDeviation="1.6" flood-color="#000" flood-opacity="0.35"/></filter></defs><g filter="url(#sh1)"><circle cx="36.3" cy="25" r="20.1" fill="#e98b39"/><path d="M2.0 25 L19.5 17.3 Q20.1 13.5 22.3 10 V40 Q20.1 36.5 19.5 32.7 Z" fill="#e98b39"/></g><text x="36.4" y="33.6" text-anchor="middle" font-family="Liberation Sans, sans-serif" font-weight="bold" font-size="24.5" fill="#fff">1</text></svg>
<svg style="left:134.3px;top:373.8px;" width="62" height="50" viewBox="0 0 62 50"><defs><filter id="sh2" x="-30%" y="-30%" width="160%" height="170%"><feDropShadow dx="1.5" dy="2" stdDeviation="1.6" flood-color="#000" flood-opacity="0.35"/></filter></defs><g filter="url(#sh2)"><circle cx="36.3" cy="25" r="20.1" fill="#e98b39"/><path d="M2.0 25 L19.5 17.3 Q20.1 13.5 22.3 10 V40 Q20.1 36.5 19.5 32.7 Z" fill="#e98b39"/></g><text x="36.4" y="33.6" text-anchor="middle" font-family="Liberation Sans, sans-serif" font-weight="bold" font-size="24.5" fill="#fff">2</text></svg>

<!-- SHEET TABS / STATUS BAR -->
<div style="left:778px;top:208px;width:22px;height:342px;background:#e6e6e6;"></div>
<div style="left:781px;top:225px;width:15px;height:310px;background:#d6d6d6;"></div>
<div style="left:781px;top:210px;width:15px;height:15px;background:#fff;border:1px solid #b4b4b4;box-sizing:border-box;"></div>
<svg style="left:785px;top:215px;" width="7" height="4" viewBox="0 0 7 4"><path d="M0 4 L3.5 0.2 L7 4 Z" fill="#777"/></svg>
<div style="left:781px;top:225px;width:15px;height:216px;background:#fff;border:1px solid #b4b4b4;box-sizing:border-box;"></div>
<div style="left:781px;top:535px;width:15px;height:15px;background:#fff;border:1px solid #cfcfcf;box-sizing:border-box;"></div>
<svg style="left:785px;top:541px;" width="7" height="4" viewBox="0 0 7 4"><path d="M0 0 L3.5 3.8 L7 0 Z" fill="#777"/></svg>
<div style="left:0px;top:550px;width:800px;height:27px;background:#e6e6e6;"></div>
<svg style="left:27.7px;top:559px;" width="4.6" height="7" viewBox="0 0 4.6 7"><path d="M4.6 0 V7 L0 3.5 Z" fill="#b9b9b9"/></svg>
<svg style="left:56.8px;top:559px;" width="4.6" height="7" viewBox="0 0 4.6 7"><path d="M0 0 V7 L4.6 3.5 Z" fill="#b9b9b9"/></svg>
<div style="left:101px;top:549px;width:82px;height:24px;background:#fff;"></div>
<div style="left:101px;top:549px;width:1px;height:24px;background:#b0b0b0;"></div>
<div style="left:182px;top:549px;width:1px;height:24px;background:#b0b0b0;"></div>
<div style="left:101px;top:572px;width:82px;height:2px;background:#217346;"></div>
<span class="t" style="top:556.00px;font-size:13.4px;left:113.20px;transform:scaleX(0.9410);transform-origin:0 0;font-weight:bold;color:#217346;">Summary</span>
<svg style="left:215.3px;top:554.5px;" width="17" height="17" viewBox="0 0 17 17"><circle cx="8.5" cy="8.5" r="7.5" fill="none" stroke="#777" stroke-width="1.3"/><path d="M4.5 8.5 H12.5 M8.5 4.5 V12.5" stroke="#666" stroke-width="1.8"/></svg>
<div style="left:480px;top:557.5px;width:2px;height:2px;background:#b0b0b0;"></div>
<div style="left:480px;top:561.5px;width:2px;height:2px;background:#b0b0b0;"></div>
<div style="left:480px;top:565.5px;width:2px;height:2px;background:#b0b0b0;"></div>
<div style="left:497px;top:556px;width:266px;height:15px;background:#d6d6d6;"></div>
<div style="left:497px;top:556px;width:15px;height:15px;background:#fff;border:1px solid #b4b4b4;box-sizing:border-box;"></div>
<svg style="left:502px;top:560.2px;" width="4" height="7" viewBox="0 0 4 7"><path d="M4 0 V7 L0 3.5 Z" fill="#555"/></svg>
<div style="left:512px;top:556px;width:219px;height:15px;background:#fff;border:1px solid #ababab;box-sizing:border-box;"></div>
<div style="left:765px;top:556px;width:15px;height:15px;background:#fff;border:1px solid #cfcfcf;box-sizing:border-box;"></div>
<svg style="left:771px;top:560.2px;" width="4" height="7" viewBox="0 0 4 7"><path d="M0 0 V7 L4 3.5 Z" fill="#777"/></svg>
<div style="left:0px;top:577px;width:800px;height:23px;background:#f3f2f1;"></div>
<div style="left:0px;top:577px;width:800px;height:1px;background:#c6c6c6;"></div>
<span class="t" style="top:583.00px;font-size:10.7px;left:8.60px;transform:scaleX(0.9766);transform-origin:0 0;">Ready</span>
<div style="left:502px;top:578px;width:38px;height:22px;background:#c8c8c8;"></div>
<svg style="left:514.5px;top:581.5px;" width="13" height="13" viewBox="0 0 13 13"><rect x="0.5" y="0.5" width="12" height="12" fill="#9c9c9c" stroke="#555" stroke-width="1"/><path d="M4.5 0.5 V12.5 M8.5 0.5 V12.5 M0.5 4.5 H12.5 M0.5 8.5 H12.5" stroke="#555" stroke-width="1"/></svg>
<svg style="left:552.5px;top:581.5px;" width="14" height="13" viewBox="0 0 14 13"><rect x="0.5" y="0.5" width="13" height="12" fill="none" stroke="#555" stroke-width="1"/><rect x="3" y="2.5" width="8" height="8" fill="none" stroke="#555" stroke-width="1"/><path d="M4.5 4.6 H9.5 M4.5 6.5 H9.5 M4.5 8.4 H9.5" stroke="#555" stroke-width="0.8"/></svg>
<svg style="left:590px;top:581.5px;" width="14" height="13" viewBox="0 0 14 13"><rect x="0.5" y="0.5" width="13" height="12" fill="none" stroke="#555" stroke-width="1"/><path d="M0.5 6.5 H8.3 V0.5 M4.4 0.5 V6.5" fill="none" stroke="#555" stroke-width="1"/></svg>
<div style="left:621px;top:587px;width:6px;height:2px;background:#555;"></div>
<div style="left:631px;top:588px;width:100px;height:1px;background:#9a9a9a;"></div>
<div style="left:679px;top:582px;width:5px;height:11px;background:#666;"></div>
<div style="left:735px;top:587px;width:7px;height:2px;background:#555;"></div>
<div style="left:737.3px;top:584.4px;width:2px;height:7.2px;background:#555;"></div>
<span class="t" style="top:582.00px;font-size:10.5px;left:754.20px;transform:scaleX(0.9375);transform-origin:0 0;">100%</span>

<div style="left:0;top:0;width:1px;height:600px;background:#217346;"></div>
<div style="left:799px;top:0;width:1px;height:600px;background:#217346;"></div>
<div style="left:0;top:599px;width:800px;height:1px;background:#217346;"></div>
</div>
</body>
</html>
